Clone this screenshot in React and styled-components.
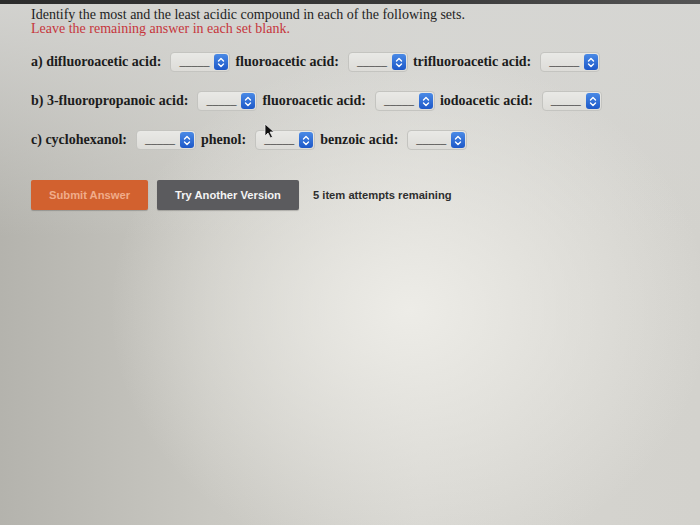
import styled, { createGlobalStyle } from 'styled-components';

const GlobalStyle = createGlobalStyle`
  html, body {
    margin: 0;
    padding: 0;
  }
  body {
    width: 700px;
    height: 525px;
    overflow: hidden;
    background:
      radial-gradient(ellipse 300px 260px at 410px 310px, rgba(237,236,231,1), rgba(237,236,231,0) 100%),
      linear-gradient(180deg, rgba(214,214,211,0.9) 0%, rgba(214,214,211,0) 45%),
      linear-gradient(90deg, #b4b3ad 0%, #c9c8c2 30%, #d6d5d0 60%, #d3d2cd 100%);
  }
`;

const sets = [
  ['a) difluoroacetic acid:', 'fluoroacetic acid:', 'trifluoroacetic acid:'],
  ['b) 3-fluoropropanoic acid:', 'fluoroacetic acid:', 'iodoacetic acid:'],
  ['c) cyclohexanol:', 'phenol:', 'benzoic acid:'],
];

export default function App() {
  return (
    <>
      <GlobalStyle />
      <TopEdge />
      <Page>
        <Intro>
          <p>Identify the most and the least acidic compound in each of the following sets.</p>
          <p className='warn'>Leave the remaining answer in each set blank.</p>
        </Intro>
        <Rows>
          {sets.map((row, i) => (
            <Row key={i}>
              {row.map(label => (
                <Item key={label}>
                  <Label>{label}</Label>
                  <Select>
                    <span className='blank'>_____</span>
                    <Arrows>
                      <svg width="8" height="11" viewBox="0 0 8 11">
                        <path d="M1.5 4 L4 1.5 L6.5 4 M1.5 7 L4 9.5 L6.5 7" fill="none" stroke="#fff" strokeWidth="1.4" strokeLinecap="round" strokeLinejoin="round" />
                      </svg>
                    </Arrows>
                  </Select>
                </Item>
              ))}
            </Row>
          ))}
        </Rows>
        <Actions>
          <Button $color='#d2612f' $text='#f0ac8a'>Submit Answer</Button>
          <Button $color='#5b5b5e' $text='#f4f4f4'>Try Another Version</Button>
          <Attempts>5 item attempts remaining</Attempts>
        </Actions>
      </Page>
      <Cursor width="12" height="16" viewBox="0 0 12 16">
        <path d="M1 1 L1 13 L4 10 L6.5 15 L8.5 14 L6 9 L10 9 Z" fill="#111" stroke="#eee" strokeWidth="0.8" />
      </Cursor>
    </>
  );
}

// styled components
const TopEdge = styled.div`
  height: 4px;
  background: linear-gradient(90deg, #2c2c2c, #3a3a3a 60%, #555);
`;

const Page = styled.main`
  position: relative;
  box-sizing: border-box;
  padding: 4px 0 0 31px;
`;

const Intro = styled.div`
  font-family: 'Liberation Serif', serif;
  font-size: 14px;
  line-height: 14px;
  color: #1e1e1e;
  p{
    margin: 0;
  }
  .warn{
    color: #c6363c;
  }
`;

const Rows = styled.div`
  display: flex;
  flex-direction: column;
  gap: 19px;
  margin-top: 16px;
`;

const Row = styled.div`
  display: flex;
  align-items: center;
  gap: 5px;
`;

const Item = styled.div`
  display: flex;
  align-items: center;
  gap: 9px;
`;

const Label = styled.span`
  font-family: 'Liberation Serif', serif;
  font-weight: bold;
  font-size: 14px;
  color: #1c1c1c;
  white-space: nowrap;
`;

const Select = styled.div`
  display: flex;
  align-items: center;
  justify-content: space-between;
  box-sizing: border-box;
  width: 60px;
  height: 20px;
  padding: 0 1px 0 8px;
  border: 1px solid #c4c4c0;
  border-radius: 4px;
  background: linear-gradient(#e9e9e6, #dddcd8);
  .blank{
    font-family: 'Liberation Serif', serif;
    font-size: 12px;
    color: #333;
    margin-top: -2px;
  }
`;

const Arrows = styled.div`
  display: flex;
  align-items: center;
  justify-content: center;
  width: 14px;
  height: 16px;
  border-radius: 3px;
  background: linear-gradient(#4a8ae6, #1d58c8);
`;

const Actions = styled.div`
  display: flex;
  align-items: center;
  gap: 9px;
  margin-top: 30px;
`;

const Button = styled.div`
  display: flex;
  align-items: center;
  justify-content: center;
  box-sizing: border-box;
  height: 30px;
  padding: 0 18px;
  border-radius: 2px;
  background-color: ${props => props.$color};
  color: ${props => props.$text};
  font-family: 'Liberation Sans', Arial, sans-serif;
  font-weight: bold;
  font-size: 11.2px;
  box-shadow: 0 1px 1px rgba(0,0,0,0.2);
`;

const Attempts = styled.span`
  margin-left: 5px;
  font-family: 'Liberation Sans', Arial, sans-serif;
  font-weight: bold;
  font-size: 11.2px;
  color: #2e2e2e;
`;

const Cursor = styled.svg`
  position: absolute;
  left: 264px;
  top: 123px;
`;
